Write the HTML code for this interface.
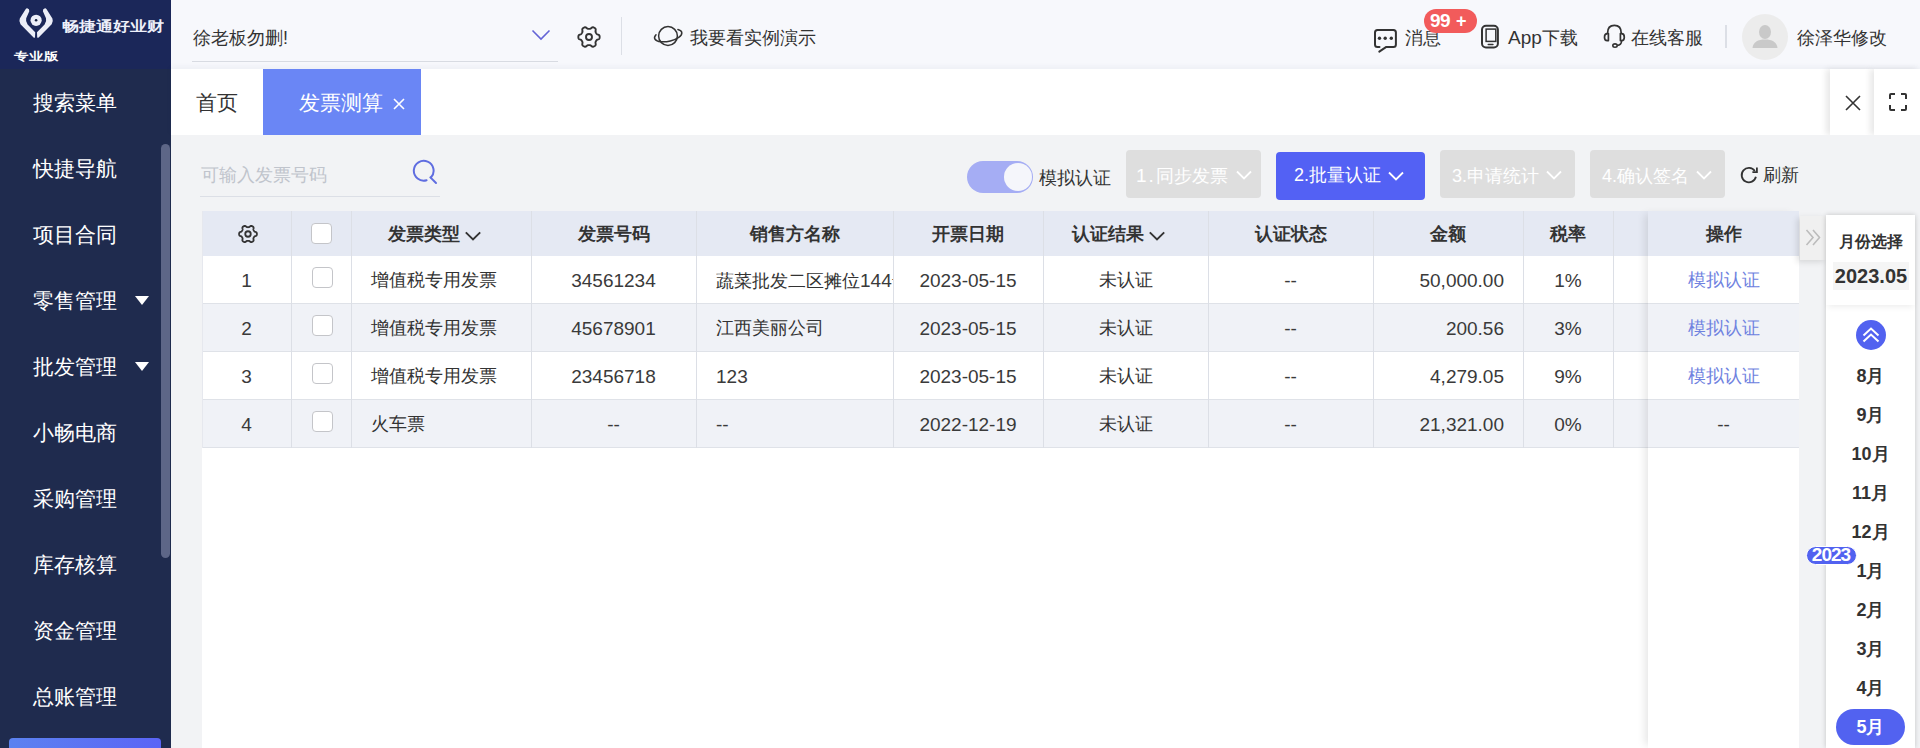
<!DOCTYPE html>
<html><head><meta charset="utf-8">
<style>
*{box-sizing:border-box;margin:0;padding:0}
html,body{width:1920px;height:748px;overflow:hidden;background:#f2f3f5;font-family:"Liberation Sans",sans-serif;color:#333}
.abs{position:absolute}
#side{position:absolute;left:0;top:0;width:171px;height:748px;background:#1f2b4e}
#logo{position:absolute;left:0;top:0;width:171px;height:69px;background:#1b2759}
.mi{position:absolute;left:33px;font-size:21px;color:#fff;line-height:24px;white-space:nowrap}
.tri{position:absolute;left:135px;width:0;height:0;border-left:7.5px solid transparent;border-right:7.5px solid transparent;border-top:9px solid #fff}
#hdr{position:absolute;left:171px;top:0;width:1749px;height:69px;background:#f7f8fc}
.t18{font-size:18px;line-height:20px;white-space:nowrap;position:absolute}
#tabs{position:absolute;left:171px;top:69px;width:1749px;height:66px;background:#fff;box-shadow:0 -2px 6px rgba(40,50,90,0.05)}
#content{position:absolute;left:171px;top:135px;width:1749px;height:613px;background:#f2f3f5}
.btn{position:absolute;height:48px;border-radius:4px;background:#dedede;color:#fff;font-size:18px;line-height:48px;white-space:nowrap}
.td{position:absolute;height:48px;line-height:49px;font-size:18px;color:#333;white-space:nowrap}
.n{font-size:19px;color:#3a3a3a}
.th{position:absolute;height:45px;line-height:47px;font-size:18px;color:#333;font-weight:bold;white-space:nowrap}
.mo{position:absolute;left:1655px;width:89px;text-align:center;font-size:18px;line-height:22px;font-weight:bold;color:#333;white-space:nowrap}
</style></head>
<body>
<div id="side">
  <div id="logo">
    <svg class="abs" style="left:14px;top:4px" width="44" height="38" viewBox="0 0 44 38">
      <g fill="#eceef8">
      <path d="M13.2 4.3 Q15.6 4.8 15.3 7.3 L12.2 14.2 Q11.3 17.4 13.6 20.6 L21.2 28.3 L21 33.2 Q20.5 34.2 19.3 33.2 L6.5 20.2 Q4.6 17.6 5.8 14.6 L11.6 5.2 Q12.3 4.2 13.2 4.3 Z"/>
      <path transform="translate(44.2,0) scale(-1,1)" d="M13.2 4.3 Q15.6 4.8 15.3 7.3 L12.2 14.2 Q11.3 17.4 13.6 20.6 L21.2 28.3 L21 33.2 Q20.5 34.2 19.3 33.2 L6.5 20.2 Q4.6 17.6 5.8 14.6 L11.6 5.2 Q12.3 4.2 13.2 4.3 Z"/>
      <circle cx="22.1" cy="16.3" r="5.6"/>
      </g>
      <circle cx="22.1" cy="16.3" r="1.3" fill="#15203f"/>
    </svg>
    <div class="abs" style="left:62px;top:19px;font-size:17px;line-height:20px;color:#eef0fa;font-weight:bold;white-space:nowrap;transform:scaleY(0.82);transform-origin:0 0">畅捷通好业财</div>
    <div class="abs" style="left:14px;top:49px;font-size:15px;line-height:17px;color:#fff;font-weight:bold;white-space:nowrap;transform:scaleY(0.76);transform-origin:0 0">专业版</div>
  </div>
  <div class="mi" style="top:91px">搜索菜单</div>
  <div class="mi" style="top:157px">快捷导航</div>
  <div class="mi" style="top:223px">项目合同</div>
  <div class="mi" style="top:289px">零售管理</div><div class="tri" style="top:296px"></div>
  <div class="mi" style="top:355px">批发管理</div><div class="tri" style="top:362px"></div>
  <div class="mi" style="top:421px">小畅电商</div>
  <div class="mi" style="top:487px">采购管理</div>
  <div class="mi" style="top:553px">库存核算</div>
  <div class="mi" style="top:619px">资金管理</div>
  <div class="mi" style="top:685px">总账管理</div>
  <div class="abs" style="left:161px;top:144px;width:9px;height:414px;border-radius:4.5px;background:#5d6687"></div>
  <div class="abs" style="left:9px;top:738px;width:152px;height:20px;border-radius:4px;background:linear-gradient(90deg,#5b82f0,#5a64f6)"></div>
</div>
<div id="hdr">
  <div class="t18" style="left:22px;top:28px;color:#333">徐老板勿删!</div>
  <div class="abs" style="left:21px;top:61px;width:366px;height:1px;background:#d8dbe2"></div>
  <svg class="abs" style="left:360px;top:29px" width="20" height="12" viewBox="0 0 20 12"><path d="M1.5 1.5 L10 10 L18.5 1.5" fill="none" stroke="#6464d6" stroke-width="1.6"/></svg>
  <svg class="abs" style="left:406.4px;top:24.8px" width="24" height="24" viewBox="0 0 24 24"><path fill="none" stroke="#333" stroke-width="1.9" stroke-linejoin="round" d="M22.65 12.00 L22.63 12.46 L22.57 12.92 L22.44 13.37 L22.19 13.80 L21.74 14.16 L21.08 14.43 L20.42 14.65 L19.94 14.89 L19.64 15.17 L19.42 15.46 L19.24 15.77 L19.06 16.07 L18.88 16.38 L18.71 16.70 L18.56 17.04 L18.48 17.43 L18.51 17.96 L18.65 18.65 L18.74 19.35 L18.65 19.93 L18.41 20.35 L18.08 20.69 L17.72 20.97 L17.33 21.22 L16.91 21.44 L16.48 21.61 L16.03 21.73 L15.54 21.72 L15.00 21.51 L14.43 21.08 L13.91 20.62 L13.47 20.33 L13.08 20.20 L12.71 20.16 L12.36 20.15 L12.00 20.15 L11.64 20.15 L11.29 20.16 L10.92 20.20 L10.53 20.33 L10.09 20.62 L9.57 21.08 L9.00 21.51 L8.46 21.72 L7.97 21.73 L7.52 21.61 L7.09 21.44 L6.68 21.22 L6.28 20.97 L5.92 20.69 L5.59 20.35 L5.35 19.93 L5.26 19.35 L5.35 18.65 L5.49 17.96 L5.52 17.43 L5.44 17.04 L5.29 16.70 L5.12 16.38 L4.94 16.08 L4.76 15.77 L4.58 15.46 L4.36 15.17 L4.06 14.89 L3.58 14.65 L2.92 14.43 L2.26 14.16 L1.81 13.80 L1.56 13.37 L1.43 12.92 L1.37 12.46 L1.35 12.00 L1.37 11.54 L1.43 11.08 L1.56 10.63 L1.81 10.20 L2.26 9.84 L2.92 9.57 L3.58 9.35 L4.06 9.11 L4.36 8.83 L4.58 8.54 L4.76 8.23 L4.94 7.92 L5.12 7.62 L5.29 7.30 L5.44 6.96 L5.52 6.57 L5.49 6.04 L5.35 5.35 L5.26 4.65 L5.35 4.07 L5.59 3.65 L5.92 3.31 L6.28 3.03 L6.67 2.78 L7.09 2.56 L7.52 2.39 L7.97 2.27 L8.46 2.28 L9.00 2.49 L9.57 2.92 L10.09 3.38 L10.53 3.67 L10.92 3.80 L11.29 3.84 L11.64 3.85 L12.00 3.85 L12.36 3.85 L12.71 3.84 L13.08 3.80 L13.47 3.67 L13.91 3.38 L14.43 2.92 L15.00 2.49 L15.54 2.28 L16.03 2.27 L16.48 2.39 L16.91 2.56 L17.32 2.78 L17.72 3.03 L18.08 3.31 L18.41 3.65 L18.65 4.07 L18.74 4.65 L18.65 5.35 L18.51 6.04 L18.48 6.57 L18.56 6.96 L18.71 7.30 L18.88 7.62 L19.06 7.93 L19.24 8.23 L19.42 8.54 L19.64 8.83 L19.94 9.11 L20.42 9.35 L21.08 9.57 L21.74 9.84 L22.19 10.20 L22.44 10.63 L22.57 11.08 L22.63 11.54Z"/><circle cx="12" cy="12" r="3.0" fill="none" stroke="#333" stroke-width="1.9"/></svg>
  <div class="abs" style="left:450px;top:17px;width:1px;height:38px;background:#dcdfe6"></div>
  <svg class="abs" style="left:477.1px;top:15.8px" width="40" height="40" viewBox="-20 -20 40 40"><circle cx="0" cy="0" r="9.4" fill="none" stroke="#333" stroke-width="1.5"/><path d="M-12 -1.2 A13.9 5.9 -12 1 0 9.9 -6.5" fill="none" stroke="#333" stroke-width="1.5" stroke-linecap="round"/></svg>
  <div class="t18" style="left:519px;top:28px">我要看实例演示</div>
  <svg class="abs" style="left:1201px;top:27px" width="27" height="27" viewBox="0 0 27 27"><path d="M7.5 19.9 H5.5 Q3 19.9 3 17.4 V5.4 Q3 2.9 5.5 2.9 H21.4 Q23.9 2.9 23.9 5.4 V17.4 Q23.9 19.9 21.4 19.9 H14.3 L7.3 24.6" fill="none" stroke="#333" stroke-width="2" stroke-linejoin="round" stroke-linecap="round"/><circle cx="7.5" cy="11.3" r="1.7" fill="#333"/><circle cx="13.2" cy="11.3" r="1.7" fill="#333"/><circle cx="19.3" cy="11.3" r="1.7" fill="#333"/></svg>
  <div class="t18" style="left:1234px;top:28px">消息</div>
  <div class="abs" style="left:1253px;top:9px;width:53px;height:24px;border-radius:12px;background:#f25b5b;color:#fff;font-weight:bold;white-space:nowrap"><span class="abs" style="left:6px;top:1px;font-size:19px;line-height:22px;letter-spacing:-0.5px">99</span><span class="abs" style="left:32px;top:1px;font-size:18px;line-height:22px">+</span></div>
  <svg class="abs" style="left:1309px;top:24px" width="20" height="26" viewBox="0 0 20 26"><rect x="2" y="1.8" width="15.9" height="21.6" rx="4" fill="none" stroke="#333" stroke-width="2"/><rect x="6.1" y="5.1" width="9.7" height="12.3" fill="none" stroke="#333" stroke-width="1.5"/><path d="M8.3 20.5 H12.9" stroke="#333" stroke-width="1.6" stroke-linecap="round"/></svg>
  <div class="t18" style="left:1337px;top:28px"><span style="font-size:19px">App</span>下载</div>
  <svg class="abs" style="left:1430px;top:22px" width="26" height="28" viewBox="0 0 26 28"><path d="M6.6 11 C6.6 6 9.2 3.4 13.4 3.4 C17.6 3.4 20.2 6 20.2 11" fill="none" stroke="#333" stroke-width="1.7"/><path d="M7.4 11.6 H6.2 Q3.5 11.6 3.5 15.2 Q3.5 18.6 6.2 18.6 H7.4 Z" fill="none" stroke="#333" stroke-width="1.7" stroke-linejoin="round"/><path d="M19.4 11.6 H20.6 Q23.3 11.6 23.3 15.2 Q23.3 18.6 20.6 18.6 H19.4 Z" fill="none" stroke="#333" stroke-width="1.7" stroke-linejoin="round"/><path d="M20.6 18.8 Q20.4 23.3 16.3 23.4" fill="none" stroke="#333" stroke-width="1.6"/><ellipse cx="14" cy="23.6" rx="2.2" ry="1.7" fill="none" stroke="#333" stroke-width="1.6"/></svg>
  <div class="t18" style="left:1460px;top:28px">在线客服</div>
  <div class="abs" style="left:1554px;top:25px;width:2px;height:23px;background:#dcdfe6"></div>
  <div class="abs" style="left:1571px;top:14px;width:46px;height:46px;border-radius:50%;background:#ececec;overflow:hidden">
    <svg class="abs" style="left:0;top:0" width="46" height="46" viewBox="0 0 46 46"><ellipse cx="23" cy="18" rx="6" ry="7" fill="#c9c9c9"/><path d="M10.5 34 C11 28 16 25.5 23 25.5 C30 25.5 35 28 35.5 34 Z" fill="#c9c9c9"/></svg>
  </div>
  <div class="t18" style="left:1626px;top:28px">徐泽华修改</div>
</div>
<div id="tabs">
  <div class="abs" style="left:25px;top:22px;font-size:21px;line-height:24px;color:#333;white-space:nowrap">首页</div>
  <div class="abs" style="left:92px;top:0;width:158px;height:66px;background:#6a86f5">
    <div class="abs" style="left:36px;top:22px;font-size:21px;line-height:24px;color:#fff;white-space:nowrap">发票测算</div>
    <svg class="abs" style="left:130px;top:29px" width="12" height="12" viewBox="0 0 12 12"><path d="M1 1 L11 11 M11 1 L1 11" stroke="#fff" stroke-width="1.6"/></svg>
  </div>
  <div class="abs" style="left:1659px;top:0;width:45px;height:66px;box-shadow:-4px 0 6px rgba(0,0,0,0.09);background:#fff"></div>
  <div class="abs" style="left:1703px;top:0;width:46px;height:66px;box-shadow:-4px 0 6px rgba(0,0,0,0.09);background:#fff"></div>
  <svg class="abs" style="left:1674px;top:26px" width="16" height="16" viewBox="0 0 16 16"><path d="M1 1 L15 15 M15 1 L1 15" stroke="#333" stroke-width="1.6"/></svg>
  <svg class="abs" style="left:1718px;top:24px" width="18" height="18" viewBox="0 0 18 18"><path d="M1 6 V2 Q1 1 2 1 H6 M12 1 H16 Q17 1 17 2 V6 M17 12 V16 Q17 17 16 17 H12 M6 17 H2 Q1 17 1 16 V12" fill="none" stroke="#333" stroke-width="2"/></svg>
</div>
<div id="content">
  <div class="t18" style="left:30px;top:30px;color:#c0c4cc">可输入发票号码</div>
  <div class="abs" style="left:29px;top:61px;width:240px;height:1px;background:#dcdfe6"></div>
  <svg class="abs" style="left:241px;top:24px" width="28" height="28" viewBox="0 0 28 28"><path d="M14.59 21.17 A9.9 9.9 0 1 1 18.9 18.5" fill="none" stroke="#5f6de0" stroke-width="2" stroke-linecap="round"/><path d="M18.4 18.4 L24 24" stroke="#5f6de0" stroke-width="2" stroke-linecap="round"/></svg>
  <div class="abs" style="left:796px;top:26px;width:66px;height:32px;border-radius:16px;background:#a5adf4"></div>
  <div class="abs" style="left:833px;top:28px;width:28px;height:28px;border-radius:50%;background:#f5f6fb"></div>
  <div class="t18" style="left:868px;top:33px">模拟认证</div>
  <div class="btn" style="left:955px;top:15px;width:135px;background:#dedede"><span class="abs" style="left:10px;top:2px"><span style="font-size:19px;letter-spacing:2px">1.</span>同步发票</span><svg class="abs" style="left:110px;top:20px" width="16" height="10" viewBox="0 0 16 10"><path d="M1 1.5 L8 8.5 L15 1.5" fill="none" stroke="#fff" stroke-width="1.8"/></svg></div>
  <div class="btn" style="left:1105px;top:17px;width:149px;background:#5361f4"><span class="abs" style="left:18px;top:-1px">2.批量认证</span><svg class="abs" style="left:112px;top:19px" width="16" height="10" viewBox="0 0 16 10"><path d="M1 1.5 L8 8.5 L15 1.5" fill="none" stroke="#fff" stroke-width="1.8"/></svg></div>
  <div class="btn" style="left:1269px;top:15px;width:135px;background:#dedede"><span class="abs" style="left:12px;top:2px">3.申请统计</span><svg class="abs" style="left:106px;top:20px" width="16" height="10" viewBox="0 0 16 10"><path d="M1 1.5 L8 8.5 L15 1.5" fill="none" stroke="#fff" stroke-width="1.8"/></svg></div>
  <div class="btn" style="left:1419px;top:15px;width:135px;background:#dedede"><span class="abs" style="left:12px;top:2px">4.确认签名</span><svg class="abs" style="left:106px;top:20px" width="16" height="10" viewBox="0 0 16 10"><path d="M1 1.5 L8 8.5 L15 1.5" fill="none" stroke="#fff" stroke-width="1.8"/></svg></div>
  <svg class="abs" style="left:1567px;top:30px" width="22" height="22" viewBox="0 0 22 22"><path d="M17.9 11.7 A7.2 7.2 0 1 1 16.8 6.0" fill="none" stroke="#333" stroke-width="1.8"/><path d="M18.9 2.4 V7.1 H14.4" fill="none" stroke="#333" stroke-width="1.8"/></svg>
  <div class="t18" style="left:1592px;top:30px">刷新</div>
  <div class="abs" style="left:31px;top:76px;width:1597px;height:537px;background:#fff"></div>
  <div class="abs" style="left:31px;top:76px;width:1597px;height:45px;background:#e5e9f3"></div>
  <div class="abs" style="left:31px;top:121px;width:1597px;height:48px;background:#fff;border-bottom:1px solid #dfe2e8"></div>
  <div class="abs" style="left:31px;top:169px;width:1597px;height:48px;background:#f0f2f7;border-bottom:1px solid #dfe2e8"></div>
  <div class="abs" style="left:31px;top:217px;width:1597px;height:48px;background:#fff;border-bottom:1px solid #dfe2e8"></div>
  <div class="abs" style="left:31px;top:265px;width:1597px;height:48px;background:#f0f2f7;border-bottom:1px solid #dfe2e8"></div>
  <div class="abs" style="left:120px;top:76px;width:1px;height:237px;background:#dcdfe6"></div>
  <div class="abs" style="left:180px;top:76px;width:1px;height:237px;background:#dcdfe6"></div>
  <div class="abs" style="left:360px;top:76px;width:1px;height:237px;background:#dcdfe6"></div>
  <div class="abs" style="left:525px;top:76px;width:1px;height:237px;background:#dcdfe6"></div>
  <div class="abs" style="left:722px;top:76px;width:1px;height:237px;background:#dcdfe6"></div>
  <div class="abs" style="left:872px;top:76px;width:1px;height:237px;background:#dcdfe6"></div>
  <div class="abs" style="left:1037px;top:76px;width:1px;height:237px;background:#dcdfe6"></div>
  <div class="abs" style="left:1202px;top:76px;width:1px;height:237px;background:#dcdfe6"></div>
  <div class="abs" style="left:1352px;top:76px;width:1px;height:237px;background:#dcdfe6"></div>
  <div class="abs" style="left:1442px;top:76px;width:1px;height:237px;background:#dcdfe6"></div>
  <div class="abs" style="left:31px;top:76px;width:1px;height:237px;background:#e6e8ee"></div>
  <svg class="abs" style="left:67px;top:89px" width="20" height="20" viewBox="0 0 24 24"><path fill="none" stroke="#333" stroke-width="2.2" stroke-linejoin="round" d="M22.65 12.00 L22.63 12.46 L22.57 12.92 L22.44 13.37 L22.19 13.80 L21.74 14.16 L21.08 14.43 L20.42 14.65 L19.94 14.89 L19.64 15.17 L19.42 15.46 L19.24 15.77 L19.06 16.07 L18.88 16.38 L18.71 16.70 L18.56 17.04 L18.48 17.43 L18.51 17.96 L18.65 18.65 L18.74 19.35 L18.65 19.93 L18.41 20.35 L18.08 20.69 L17.72 20.97 L17.33 21.22 L16.91 21.44 L16.48 21.61 L16.03 21.73 L15.54 21.72 L15.00 21.51 L14.43 21.08 L13.91 20.62 L13.47 20.33 L13.08 20.20 L12.71 20.16 L12.36 20.15 L12.00 20.15 L11.64 20.15 L11.29 20.16 L10.92 20.20 L10.53 20.33 L10.09 20.62 L9.57 21.08 L9.00 21.51 L8.46 21.72 L7.97 21.73 L7.52 21.61 L7.09 21.44 L6.68 21.22 L6.28 20.97 L5.92 20.69 L5.59 20.35 L5.35 19.93 L5.26 19.35 L5.35 18.65 L5.49 17.96 L5.52 17.43 L5.44 17.04 L5.29 16.70 L5.12 16.38 L4.94 16.08 L4.76 15.77 L4.58 15.46 L4.36 15.17 L4.06 14.89 L3.58 14.65 L2.92 14.43 L2.26 14.16 L1.81 13.80 L1.56 13.37 L1.43 12.92 L1.37 12.46 L1.35 12.00 L1.37 11.54 L1.43 11.08 L1.56 10.63 L1.81 10.20 L2.26 9.84 L2.92 9.57 L3.58 9.35 L4.06 9.11 L4.36 8.83 L4.58 8.54 L4.76 8.23 L4.94 7.92 L5.12 7.62 L5.29 7.30 L5.44 6.96 L5.52 6.57 L5.49 6.04 L5.35 5.35 L5.26 4.65 L5.35 4.07 L5.59 3.65 L5.92 3.31 L6.28 3.03 L6.67 2.78 L7.09 2.56 L7.52 2.39 L7.97 2.27 L8.46 2.28 L9.00 2.49 L9.57 2.92 L10.09 3.38 L10.53 3.67 L10.92 3.80 L11.29 3.84 L11.64 3.85 L12.00 3.85 L12.36 3.85 L12.71 3.84 L13.08 3.80 L13.47 3.67 L13.91 3.38 L14.43 2.92 L15.00 2.49 L15.54 2.28 L16.03 2.27 L16.48 2.39 L16.91 2.56 L17.32 2.78 L17.72 3.03 L18.08 3.31 L18.41 3.65 L18.65 4.07 L18.74 4.65 L18.65 5.35 L18.51 6.04 L18.48 6.57 L18.56 6.96 L18.71 7.30 L18.88 7.62 L19.06 7.93 L19.24 8.23 L19.42 8.54 L19.64 8.83 L19.94 9.11 L20.42 9.35 L21.08 9.57 L21.74 9.84 L22.19 10.20 L22.44 10.63 L22.57 11.08 L22.63 11.54Z"/><circle cx="12" cy="12" r="3.3" fill="none" stroke="#333" stroke-width="2.2"/></svg>
  <div class="abs" style="left:140px;top:88px;width:21px;height:21px;border:1px solid #c4c5c9;border-radius:4px;background:#fff"></div>
  <div class="th" style="left:180px;top:76px;width:167px;text-align:center;">发票类型<svg style="display:inline-block;vertical-align:middle;margin-left:5px;margin-top:2px" width="16" height="10" viewBox="0 0 16 10"><path d="M0.8 1.3 L8 8.5 L15.2 1.3" fill="none" stroke="#333" stroke-width="1.9"/></svg></div>
  <div class="th" style="left:360px;top:76px;width:165px;text-align:center;">发票号码</div>
  <div class="th" style="left:525px;top:76px;width:197px;text-align:center;">销售方名称</div>
  <div class="th" style="left:722px;top:76px;width:150px;text-align:center;">开票日期</div>
  <div class="th" style="left:872px;top:76px;width:151px;text-align:center;">认证结果<svg style="display:inline-block;vertical-align:middle;margin-left:5px;margin-top:2px" width="16" height="10" viewBox="0 0 16 10"><path d="M0.8 1.3 L8 8.5 L15.2 1.3" fill="none" stroke="#333" stroke-width="1.9"/></svg></div>
  <div class="th" style="left:1037px;top:76px;width:165px;text-align:center;">认证状态</div>
  <div class="th" style="left:1202px;top:76px;width:150px;text-align:center;">金额</div>
  <div class="th" style="left:1352px;top:76px;width:90px;text-align:center;">税率</div>
  <div class="td" style="left:31px;top:121px;width:89px;text-align:center;"><span class="n">1</span></div>
  <div class="abs" style="left:141px;top:132px;width:21px;height:21px;border:1px solid #c4c5c9;border-radius:4px;background:#fff"></div>
  <div class="td" style="left:200px;top:121px;width:160px;text-align:left;">增值税专用发票</div>
  <div class="td" style="left:360px;top:121px;width:165px;text-align:center;"><span class="n">34561234</span></div>
  <div class="td" style="left:545px;top:121px;width:177px;text-align:left;overflow:hidden">蔬菜批发二区摊位<span class="n">144号</span></div>
  <div class="td" style="left:722px;top:121px;width:150px;text-align:center;"><span class="n">2023-05-15</span></div>
  <div class="td" style="left:872px;top:121px;width:165px;text-align:center;">未认证</div>
  <div class="td" style="left:1037px;top:121px;width:165px;text-align:center;"><span class="n">--</span></div>
  <div class="td" style="left:1202px;top:121px;width:131px;text-align:right;"><span class="n">50,000.00</span></div>
  <div class="td" style="left:1352px;top:121px;width:90px;text-align:center;"><span class="n">1%</span></div>
  <div class="td" style="left:31px;top:169px;width:89px;text-align:center;"><span class="n">2</span></div>
  <div class="abs" style="left:141px;top:180px;width:21px;height:21px;border:1px solid #c4c5c9;border-radius:4px;background:#fff"></div>
  <div class="td" style="left:200px;top:169px;width:160px;text-align:left;">增值税专用发票</div>
  <div class="td" style="left:360px;top:169px;width:165px;text-align:center;"><span class="n">45678901</span></div>
  <div class="td" style="left:545px;top:169px;width:177px;text-align:left;overflow:hidden">江西美丽公司</div>
  <div class="td" style="left:722px;top:169px;width:150px;text-align:center;"><span class="n">2023-05-15</span></div>
  <div class="td" style="left:872px;top:169px;width:165px;text-align:center;">未认证</div>
  <div class="td" style="left:1037px;top:169px;width:165px;text-align:center;"><span class="n">--</span></div>
  <div class="td" style="left:1202px;top:169px;width:131px;text-align:right;"><span class="n">200.56</span></div>
  <div class="td" style="left:1352px;top:169px;width:90px;text-align:center;"><span class="n">3%</span></div>
  <div class="td" style="left:31px;top:217px;width:89px;text-align:center;"><span class="n">3</span></div>
  <div class="abs" style="left:141px;top:228px;width:21px;height:21px;border:1px solid #c4c5c9;border-radius:4px;background:#fff"></div>
  <div class="td" style="left:200px;top:217px;width:160px;text-align:left;">增值税专用发票</div>
  <div class="td" style="left:360px;top:217px;width:165px;text-align:center;"><span class="n">23456718</span></div>
  <div class="td" style="left:545px;top:217px;width:177px;text-align:left;overflow:hidden"><span class="n">123</span></div>
  <div class="td" style="left:722px;top:217px;width:150px;text-align:center;"><span class="n">2023-05-15</span></div>
  <div class="td" style="left:872px;top:217px;width:165px;text-align:center;">未认证</div>
  <div class="td" style="left:1037px;top:217px;width:165px;text-align:center;"><span class="n">--</span></div>
  <div class="td" style="left:1202px;top:217px;width:131px;text-align:right;"><span class="n">4,279.05</span></div>
  <div class="td" style="left:1352px;top:217px;width:90px;text-align:center;"><span class="n">9%</span></div>
  <div class="td" style="left:31px;top:265px;width:89px;text-align:center;"><span class="n">4</span></div>
  <div class="abs" style="left:141px;top:276px;width:21px;height:21px;border:1px solid #c4c5c9;border-radius:4px;background:#fff"></div>
  <div class="td" style="left:200px;top:265px;width:160px;text-align:left;">火车票</div>
  <div class="td" style="left:360px;top:265px;width:165px;text-align:center;"><span class="n">--</span></div>
  <div class="td" style="left:545px;top:265px;width:177px;text-align:left;overflow:hidden"><span class="n">--</span></div>
  <div class="td" style="left:722px;top:265px;width:150px;text-align:center;"><span class="n">2022-12-19</span></div>
  <div class="td" style="left:872px;top:265px;width:165px;text-align:center;">未认证</div>
  <div class="td" style="left:1037px;top:265px;width:165px;text-align:center;"><span class="n">--</span></div>
  <div class="td" style="left:1202px;top:265px;width:131px;text-align:right;"><span class="n">21,321.00</span></div>
  <div class="td" style="left:1352px;top:265px;width:90px;text-align:center;"><span class="n">0%</span></div>
  <div class="abs" style="left:1477px;top:76px;width:151px;height:537px;background:#fff;box-shadow:-6px 0 8px -3px rgba(0,0,0,0.10)"></div>
  <div class="abs" style="left:1477px;top:76px;width:151px;height:45px;background:#e5e9f3"></div>
  <div class="abs" style="left:1477px;top:121px;width:151px;height:48px;background:#fff;border-bottom:1px solid #dfe2e8"></div>
  <div class="abs" style="left:1477px;top:169px;width:151px;height:48px;background:#f0f2f7;border-bottom:1px solid #dfe2e8"></div>
  <div class="abs" style="left:1477px;top:217px;width:151px;height:48px;background:#fff;border-bottom:1px solid #dfe2e8"></div>
  <div class="abs" style="left:1477px;top:265px;width:151px;height:48px;background:#f0f2f7;border-bottom:1px solid #dfe2e8"></div>
  <div class="th" style="left:1477px;top:76px;width:151px;text-align:center;">操作</div>
  <div class="td" style="left:1477px;top:121px;width:151px;text-align:center;color:#6f82e0">模拟认证</div>
  <div class="td" style="left:1477px;top:169px;width:151px;text-align:center;color:#6f82e0">模拟认证</div>
  <div class="td" style="left:1477px;top:217px;width:151px;text-align:center;color:#6f82e0">模拟认证</div>
  <div class="td" style="left:1477px;top:265px;width:151px;text-align:center;"><span class="n">--</span></div>
  <div class="abs" style="left:1629px;top:81px;width:27px;height:44px;background:#f0f0f0;box-shadow:-3px 2px 6px rgba(0,0,0,0.12)"></div>
  <svg class="abs" style="left:1634px;top:94px" width="18" height="17" viewBox="0 0 18 17"><path d="M1.5 1 L8 8.5 L1.5 16 M8 1 L14.5 8.5 L8 16" fill="none" stroke="#bcbcbc" stroke-width="1.6"/></svg>
  <div class="abs" style="left:1655px;top:80px;width:89px;height:533px;background:#fff;box-shadow:0 0 5px rgba(0,0,0,0.2)"></div>
  <div class="abs" style="left:1655px;top:80px;width:89px;height:90px;background:#fff;box-shadow:0 4px 6px -2px rgba(0,0,0,0.07)"></div>
  <div class="abs" style="left:1655px;top:97px;width:89px;text-align:center;font-size:16px;line-height:20px;font-weight:bold;color:#333;white-space:nowrap">月份选择</div>
  <div class="abs" style="left:1662px;top:127px;width:76px;height:28px;background:#f5f5f5;text-align:center;font-size:20px;line-height:29px;font-weight:bold;color:#333;white-space:nowrap">2023.05</div>
  <div class="abs" style="left:1685px;top:185px;width:30px;height:30px;border-radius:50%;background:#5262f0"></div>
  <svg class="abs" style="left:1691px;top:191px" width="18" height="18" viewBox="0 0 18 18"><path d="M1.5 9.5 L9 2.5 L16.5 9.5 M1.5 15.5 L9 8.5 L16.5 15.5" fill="none" stroke="#fff" stroke-width="2"/></svg>
  <div class="mo" style="top:230px">8月</div>
  <div class="mo" style="top:269px">9月</div>
  <div class="mo" style="top:308px">10月</div>
  <div class="mo" style="top:347px">11月</div>
  <div class="mo" style="top:386px">12月</div>
  <div class="mo" style="top:425px">1月</div>
  <div class="mo" style="top:464px">2月</div>
  <div class="mo" style="top:503px">3月</div>
  <div class="mo" style="top:542px">4月</div>
  <div class="abs" style="left:1665px;top:574px;width:69px;height:36px;border-radius:18px;background:#5262f0;text-align:center;font-size:18px;line-height:36px;font-weight:bold;color:#fff;white-space:nowrap">5月</div>
  <div class="abs" style="left:1635px;top:411px;width:51px;height:19px;border-radius:10px;background:#5262f0;border:1.5px solid #fff;text-align:center;font-size:19px;line-height:16px;font-weight:bold;color:#fff;white-space:nowrap;letter-spacing:-1px;text-indent:-1px">2023</div>
</div>
</body></html>
